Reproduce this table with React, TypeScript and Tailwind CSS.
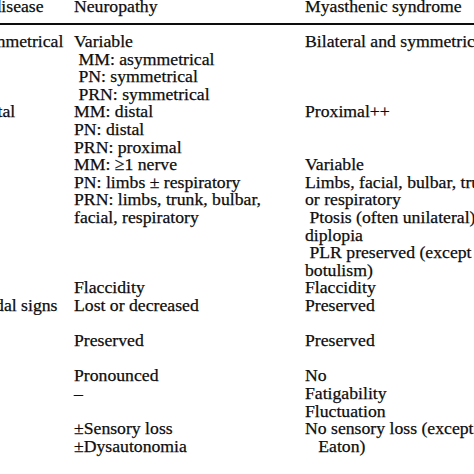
import React from 'react';

type Row = {
  label?: string;
  labelShift?: string;
  neuro: string[];
  myas: string[];
  gapAfter?: boolean;
};

const rows: Row[] = [
  {
    label: 'Symmetrical',
    neuro: ['Variable', '\u00a0MM: asymmetrical', '\u00a0PN: symmetrical', '\u00a0PRN: symmetrical'],
    myas: ['Bilateral and symmetrical'],
  },
  {
    label: 'Distal',
    neuro: ['MM: distal', 'PN: distal', 'PRN: proximal'],
    myas: ['Proximal++'],
  },
  {
    neuro: ['MM: \u22651 nerve', 'PN: limbs \u00b1 respiratory', 'PRN: limbs, trunk, bulbar,', 'facial, respiratory'],
    myas: [
      'Variable',
      'Limbs, facial, bulbar, trunk',
      'or respiratory',
      '\u00a0Ptosis (often unilateral),',
      'diplopia',
      '\u00a0PLR preserved (except',
      'botulism)',
    ],
  },
  { neuro: ['Flaccidity'], myas: ['Flaccidity'] },
  {
    label: 'Pyramidal signs',
    labelShift: 'ml-[-29px]',
    neuro: ['Lost or decreased'],
    myas: ['Preserved'],
    gapAfter: true,
  },
  { neuro: ['Preserved'], myas: ['Preserved'], gapAfter: true },
  { neuro: ['Pronounced'], myas: ['No'] },
  { neuro: ['\u2013'], myas: ['Fatigability', 'Fluctuation'] },
  {
    neuro: ['\u00b1Sensory loss', '\u00b1Dysautonomia'],
    myas: ['No sensory loss (except Lambert-', '\u00a0\u00a0\u00a0Eaton)'],
  },
];

export default function App() {
  return (
    <div
      className="w-[474px] h-[474px] overflow-hidden bg-white text-[#0d0d0d] text-[17.7px] leading-[17.6px] [-webkit-text-stroke:0.25px_#0d0d0d]"
      style={{ fontFamily: '"Liberation Serif", "Times New Roman", serif' }}
    >
      <div className="mt-[-2px] ml-[-27px] w-[530px]">
        {/* Header */}
        <div className="grid grid-cols-[101px_231px_1fr] whitespace-nowrap">
          <div className="overflow-hidden">
            <span className="inline-block ml-[-37px]">Muscle disease</span>
          </div>
          <div>Neuropathy</div>
          <div>Myasthenic syndrome</div>
        </div>
        <div className="h-[2.5px] bg-[#0d0d0d] mt-[7px]" />

        {/* Body */}
        <div className="mt-[8px]">
          {rows.map((r, i) => (
            <div
              key={i}
              className={`grid grid-cols-[101px_231px_1fr] whitespace-nowrap ${r.gapAfter ? 'pb-[17.6px]' : ''}`}
            >
              <div className="overflow-hidden">
                {r.label && <span className={`inline-block ${r.labelShift ?? ''}`}>{r.label}</span>}
              </div>
              <div>
                {r.neuro.map((t, j) => (
                  <div key={j}>{t}</div>
                ))}
              </div>
              <div>
                {r.myas.map((t, j) => (
                  <div key={j}>{t}</div>
                ))}
              </div>
            </div>
          ))}
        </div>
      </div>
    </div>
  );
}
